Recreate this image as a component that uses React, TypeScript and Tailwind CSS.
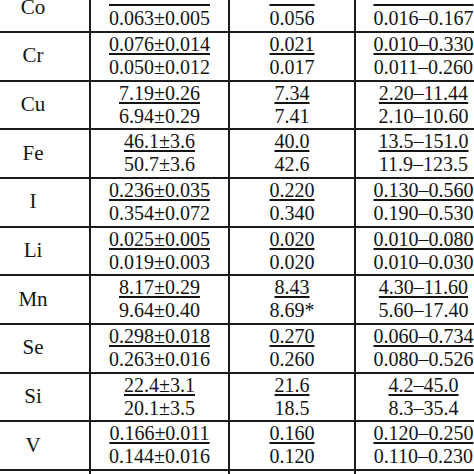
import React from "react";

type Row = { el: string; mean: [string, string]; med: [string, string]; range: [string, string]; hideTop?: boolean };

const rows: Row[] = [
  { el: "Co", mean: ["0.064±0.006", "0.063±0.005"], med: ["0.056", "0.056"], range: ["0.018–0.170", "0.016–0.167"], hideTop: true },
  { el: "Cr", mean: ["0.076±0.014", "0.050±0.012"], med: ["0.021", "0.017"], range: ["0.010–0.330", "0.011–0.260"] },
  { el: "Cu", mean: ["7.19±0.26", "6.94±0.29"], med: ["7.34", "7.41"], range: ["2.20–11.44", "2.10–10.60"] },
  { el: "Fe", mean: ["46.1±3.6", "50.7±3.6"], med: ["40.0", "42.6"], range: ["13.5–151.0", "11.9–123.5"] },
  { el: "I", mean: ["0.236±0.035", "0.354±0.072"], med: ["0.220", "0.340"], range: ["0.130–0.560", "0.190–0.530"] },
  { el: "Li", mean: ["0.025±0.005", "0.019±0.003"], med: ["0.020", "0.020"], range: ["0.010–0.080", "0.010–0.030"] },
  { el: "Mn", mean: ["8.17±0.29", "9.64±0.40"], med: ["8.43", "8.69*"], range: ["4.30–11.60", "5.60–17.40"] },
  { el: "Se", mean: ["0.298±0.018", "0.263±0.016"], med: ["0.270", "0.260"], range: ["0.060–0.734", "0.080–0.526"] },
  { el: "Si", mean: ["22.4±3.1", "20.1±3.5"], med: ["21.6", "18.5"], range: ["4.2–45.0", "8.3–35.4"] },
  { el: "V", mean: ["0.166±0.011", "0.144±0.016"], med: ["0.160", "0.120"], range: ["0.120–0.250", "0.110–0.230"] },
];

function Pair({ v, hideTop }: { v: [string, string]; hideTop?: boolean }) {
  return (
    <div className="flex flex-col items-center justify-center pb-[2px] leading-[23px]">
      <span
        className={
          hideTop
            ? "underline decoration-[1.5px] underline-offset-[2px] text-transparent decoration-[#141414]"
            : "underline decoration-[1.5px] underline-offset-[2px]"
        }
      >
        {v[0]}
      </span>
      <span>{v[1]}</span>
    </div>
  );
}

export default function App() {
  return (
    <div className="w-[474px] h-[474px] overflow-hidden bg-white text-[#141414] font-['Liberation_Serif','Times_New_Roman',serif] text-[20px]">
      <div className="-ml-[23px] -mt-[15.67px] w-[514px] flex flex-col">
        {rows.map((r) => (
          <div
            key={r.el}
            className="grid grid-cols-[114px_139px_126px_135px] h-[48.67px] border-b-2 border-[#1c1c1c]"
          >
            <div className="border-r-2 border-[#1c1c1c] flex items-center justify-center pb-[2px] text-[21px]">
              <span>{r.el}</span>
            </div>
            <div className="border-r-2 border-[#1c1c1c] flex items-center justify-center">
              <Pair v={r.mean} hideTop={r.hideTop} />
            </div>
            <div className="border-r-2 border-[#1c1c1c] flex items-center justify-center">
              <Pair v={r.med} hideTop={r.hideTop} />
            </div>
            <div className="flex items-center justify-center">
              <Pair v={r.range} hideTop={r.hideTop} />
            </div>
          </div>
        ))}
        <div className="grid grid-cols-[114px_139px_126px_135px] h-[48.67px]">
          <div className="border-r-2 border-[#1c1c1c]" />
          <div className="border-r-2 border-[#1c1c1c]" />
          <div className="border-r-2 border-[#1c1c1c]" />
          <div />
        </div>
      </div>
    </div>
  );
}
